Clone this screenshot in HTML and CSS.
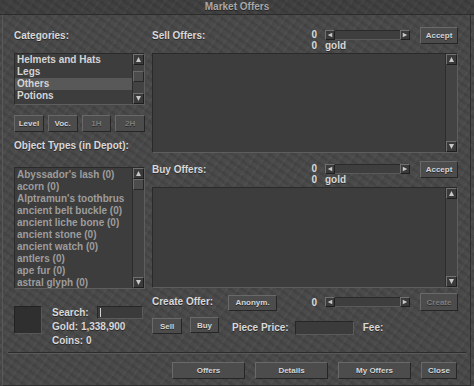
FILE: index.html
```html
<!DOCTYPE html>
<html lang="en">
<head>
  <meta charset="UTF-8" />
  <title>Market Offers</title>
  <link rel="stylesheet" href="styles.css">
</head>
<body>
  <div class="window">
    <div class="titlebar">Market Offers</div>
    <div class="frame">
      <div class="main">
        <!-- left column -->
        <div class="left">
          <div class="label">Categories:</div>
          <div class="listbox cat-list">
            <div class="items">
              <div class="item">Helmets and Hats</div>
              <div class="item">Legs</div>
              <div class="item selected">Others</div>
              <div class="item">Potions</div>
            </div>
            <div class="vscroll">
              <div class="arrow"><svg viewBox="0 0 9 9"><path d="M2 7 L4.5 2 L7 7 Z"/></svg></div>
              <div class="track"><div class="knob cat-knob"></div></div>
              <div class="arrow"><svg viewBox="0 0 9 9"><path d="M2 2 L4.5 7 L7 2 Z"/></svg></div>
            </div>
          </div>

          <div class="filters">
            <button class="btn">Level</button>
            <button class="btn">Voc.</button>
            <button class="btn dim">1H</button>
            <button class="btn dim">2H</button>
          </div>

          <div class="label obj-label">Object Types (in Depot):</div>
          <div class="listbox obj-list">
            <div class="items">
              <div class="item grey">Abyssador's lash (0)</div>
              <div class="item grey">acorn (0)</div>
              <div class="item grey">Alptramun's toothbrus</div>
              <div class="item grey">ancient belt buckle (0)</div>
              <div class="item grey">ancient liche bone (0)</div>
              <div class="item grey">ancient stone (0)</div>
              <div class="item grey">ancient watch (0)</div>
              <div class="item grey">antlers (0)</div>
              <div class="item grey">ape fur (0)</div>
              <div class="item grey">astral glyph (0)</div>
            </div>
            <div class="vscroll">
              <div class="arrow"><svg viewBox="0 0 9 9"><path d="M2 7 L4.5 2 L7 7 Z"/></svg></div>
              <div class="track"><div class="knob"></div></div>
              <div class="arrow"><svg viewBox="0 0 9 9"><path d="M2 2 L4.5 7 L7 2 Z"/></svg></div>
            </div>
          </div>

          <div class="search-area">
            <div class="item-slot"></div>
            <div class="search-info">
              <div class="search-row">
                <span class="label">Search:</span>
                <div class="input search-input"><span class="caret"></span></div>
              </div>
              <div class="label">Gold: 1,338,900</div>
              <div class="label">Coins: 0</div>
            </div>
          </div>
        </div>

        <!-- right column -->
        <div class="right">
          <div class="offer-head">
            <div class="label head-label">Sell Offers:</div>
            <div class="amount">
              <div class="amount-row">
                <span class="num">0</span>
                <div class="hslider">
                  <div class="arrow"><svg viewBox="0 0 9 9"><path d="M7 2 L2 4.5 L7 7 Z"/></svg></div>
                  <div class="htrack"></div>
                  <div class="arrow"><svg viewBox="0 0 9 9"><path d="M2 2 L7 4.5 L2 7 Z"/></svg></div>
                </div>
              </div>
              <div class="amount-row"><span class="num">0</span><span class="label">gold</span></div>
            </div>
            <button class="btn accept">Accept</button>
          </div>
          <div class="listbox offers sell-list">
            <div class="items"></div>
            <div class="vscroll">
              <div class="arrow"><svg viewBox="0 0 9 9"><path d="M2 7 L4.5 2 L7 7 Z"/></svg></div>
              <div class="track"></div>
              <div class="arrow"><svg viewBox="0 0 9 9"><path d="M2 2 L4.5 7 L7 2 Z"/></svg></div>
            </div>
          </div>

          <div class="offer-head buy-head">
            <div class="label head-label">Buy Offers:</div>
            <div class="amount">
              <div class="amount-row">
                <span class="num">0</span>
                <div class="hslider">
                  <div class="arrow"><svg viewBox="0 0 9 9"><path d="M7 2 L2 4.5 L7 7 Z"/></svg></div>
                  <div class="htrack"></div>
                  <div class="arrow"><svg viewBox="0 0 9 9"><path d="M2 2 L7 4.5 L2 7 Z"/></svg></div>
                </div>
              </div>
              <div class="amount-row"><span class="num">0</span><span class="label">gold</span></div>
            </div>
            <button class="btn accept">Accept</button>
          </div>
          <div class="listbox offers buy-list">
            <div class="items"></div>
            <div class="vscroll">
              <div class="arrow"><svg viewBox="0 0 9 9"><path d="M2 7 L4.5 2 L7 7 Z"/></svg></div>
              <div class="track"></div>
              <div class="arrow"><svg viewBox="0 0 9 9"><path d="M2 2 L4.5 7 L7 2 Z"/></svg></div>
            </div>
          </div>

          <div class="create-row">
            <div class="label create-label">Create Offer:</div>
            <button class="btn anonym">Anonym.</button>
            <div class="amount-row create-amount">
              <span class="num">0</span>
              <div class="hslider">
                <div class="arrow"><svg viewBox="0 0 9 9"><path d="M7 2 L2 4.5 L7 7 Z"/></svg></div>
                <div class="htrack"></div>
                <div class="arrow"><svg viewBox="0 0 9 9"><path d="M2 2 L7 4.5 L2 7 Z"/></svg></div>
              </div>
            </div>
            <button class="btn accept dim create">Create</button>
          </div>

          <div class="price-row">
            <button class="btn small-btn">Sell</button>
            <button class="btn small-btn buy-btn">Buy</button>
            <span class="label price-label">Piece Price:</span>
            <div class="input price-input"></div>
            <span class="label">Fee:</span>
          </div>
        </div>
      </div>

      <div class="separator"></div>

      <div class="footer">
        <button class="btn wide">Offers</button>
        <button class="btn wide">Details</button>
        <button class="btn wide">My Offers</button>
        <button class="btn close">Close</button>
      </div>
    </div>
  </div>
</body>
</html>
```

FILE: styles.css
```css
body {
  margin: 0;
  background: #3a3a3a;
  font-family: "Liberation Sans", Arial, sans-serif;
  font-weight: bold;
  font-size: 10px;
  color: #d6d6d6;
}
.window {
  width: 474px;
  height: 386px;
  background-color: #474747;
  background-image:
    repeating-linear-gradient(125deg, rgba(255,255,255,0.025) 0 2px, rgba(0,0,0,0.03) 2px 5px, rgba(255,255,255,0) 5px 9px),
    repeating-linear-gradient(35deg, rgba(0,0,0,0.04) 0 3px, rgba(255,255,255,0.02) 3px 7px);
  box-sizing: border-box;
  overflow: hidden;
}
.titlebar {
  height: 14px;
  line-height: 14px;
  text-align: center;
  color: #a8a8a8;
  font-size: 10px;
  background: rgba(0,0,0,0.12);
  border-bottom: 1px solid #2c2c2c;
  text-shadow: 0 1px 0 #222;
}
.frame {
  margin: 0 3px 0 2px;
  height: 371px;
  border-left: 1px solid #595959;
  border-right: 1px solid #2e2e2e;
  border-bottom: 1px solid #2e2e2e;
  box-sizing: border-box;
}
.main {
  display: flex;
  gap: 7px;
  padding: 12px 0 0 11px;
}
.label {
  line-height: 12px;
  color: #d8d8d8;
  text-shadow: 0 1px 0 #2a2a2a;
  white-space: nowrap;
}

/* left */
.left {
  width: 131px;
  padding-top: 3px;
  display: flex;
  flex-direction: column;
}
.listbox {
  display: flex;
  background: #3d3d3d;
  border: 1px solid #2a2a2a;
  border-right-color: #5e5e5e;
  border-bottom-color: #5e5e5e;
  box-sizing: border-box;
}
.items {
  flex: 1;
  overflow: hidden;
}
.item {
  height: 12px;
  line-height: 12px;
  padding-left: 2px;
  color: #d4d4d4;
  white-space: nowrap;
  overflow: hidden;
}
.item.selected {
  background: #585858;
}
.item.grey {
  color: #9c9c9c;
}
.cat-list {
  margin-top: 11px;
  height: 52px;
}
.obj-list {
  margin-top: 15px;
  height: 122px;
}
.obj-list .items {
  padding-top: 1px;
}
.vscroll {
  width: 11px;
  display: flex;
  flex-direction: column;
  background: #434343;
  border-left: 1px solid #2c2c2c;
}
.track {
  flex: 1;
}
.knob {
  width: 11px;
  height: 11px;
  background: #4c4c4c;
  border: 1px solid #6a6a6a;
  border-right-color: #262626;
  border-bottom-color: #262626;
  box-sizing: border-box;
}
.cat-knob {
  margin-top: 6px;
}
.arrow {
  width: 11px;
  height: 11px;
  background: #3a3a3a;
  border: 1px solid #707070;
  border-right-color: #1e1e1e;
  border-bottom-color: #1e1e1e;
  box-sizing: border-box;
  display: flex;
  align-items: center;
  justify-content: center;
}
.arrow svg {
  width: 9px;
  height: 9px;
  fill: #c8c8c8;
}
.filters {
  margin-top: 10px;
  display: grid;
  grid-template-columns: repeat(4, 1fr);
  gap: 4px;
  height: 17px;
}
.obj-label {
  margin-top: 8px;
}
.search-area {
  margin-top: 16px;
  display: flex;
  gap: 10px;
}
.item-slot {
  width: 28px;
  height: 28px;
  margin-top: 1px;
  background: #2f2f2f;
  border: 1px solid #222;
  border-right-color: #575757;
  border-bottom-color: #575757;
  box-sizing: border-box;
}
.search-info {
  display: flex;
  flex-direction: column;
}
.search-row {
  display: flex;
  align-items: center;
  gap: 8px;
  height: 15px;
  margin-bottom: 1px;
}
.input {
  background: #3b3b3b;
  border: 1px solid #262626;
  border-right-color: #5a5a5a;
  border-bottom-color: #5a5a5a;
  box-sizing: border-box;
}
.search-input {
  width: 46px;
  height: 13px;
  padding: 1px 2px;
}
.caret {
  display: block;
  width: 1px;
  height: 9px;
  background: #cfcfcf;
}
.search-info .label + .label {
  margin-top: 2px;
}

/* buttons */
.btn {
  font-family: "Liberation Sans", Arial, sans-serif;
  font-weight: bold;
  font-size: 8px;
  color: #d4d4d4;
  background: #4c4c4c;
  border: 1px solid #696969;
  border-right-color: #262626;
  border-bottom-color: #262626;
  padding: 0;
  height: 17px;
  box-sizing: border-box;
  text-shadow: 0 1px 0 #2a2a2a;
}
.btn.dim {
  color: #7e7e7e;
}

/* right */
.right {
  width: 306px;
  display: flex;
  flex-direction: column;
}
.offer-head {
  display: flex;
  height: 23px;
}
.head-label {
  flex: 1;
  margin-top: 3px;
}
.amount {
  margin-top: 2px;
}
.amount-row {
  display: flex;
  align-items: center;
  height: 11px;
  gap: 8px;
}
.num {
  width: 10px;
  text-align: right;
  line-height: 11px;
  color: #d8d8d8;
}
.hslider {
  display: flex;
  width: 85px;
  height: 10px;
}
.hslider .arrow {
  width: 10px;
  height: 10px;
}
.hslider .arrow svg {
  width: 8px;
  height: 8px;
}
.htrack {
  flex: 1;
  background: #3e3e3e;
  border-top: 1px solid #2a2a2a;
  border-bottom: 1px solid #5a5a5a;
}
.accept {
  width: 38px;
  margin-left: 10px;
}
.offers {
  margin-top: 3px;
}
.sell-list {
  height: 100px;
}
.buy-head {
  margin-top: 8px;
}
.buy-list {
  height: 101px;
}
.create-row {
  margin-top: 5px;
  display: flex;
  align-items: center;
  height: 18px;
}
.create-label {
  width: 76px;
}
.anonym {
  width: 49px;
  height: 16px;
  margin-top: 1px;
}
.create-amount {
  margin-left: auto;
}
.create {
  height: 18px;
}
.price-row {
  margin-top: 6px;
  display: flex;
  align-items: center;
  height: 18px;
}
.small-btn {
  width: 30px;
  height: 16px;
}
.buy-btn {
  width: 29px;
  margin-left: 8px;
  margin-top: -2px;
}
.price-label {
  margin-left: 13px;
  margin-top: 4px;
}
.price-input {
  width: 59px;
  height: 14px;
  margin: 4px 9px 0 6px;
}
.price-row .label:last-child {
  margin-top: 4px;
}

/* footer */
.separator {
  margin: 5px 4px 0 5px;
  border-top: 1px solid #2c2c2c;
  border-bottom: 1px solid #5a5a5a;
}
.footer {
  display: flex;
  justify-content: flex-end;
  gap: 10px;
  padding: 8px 13px 0 0;
}
.wide {
  width: 73px;
}
.close {
  width: 36px;
}
```
